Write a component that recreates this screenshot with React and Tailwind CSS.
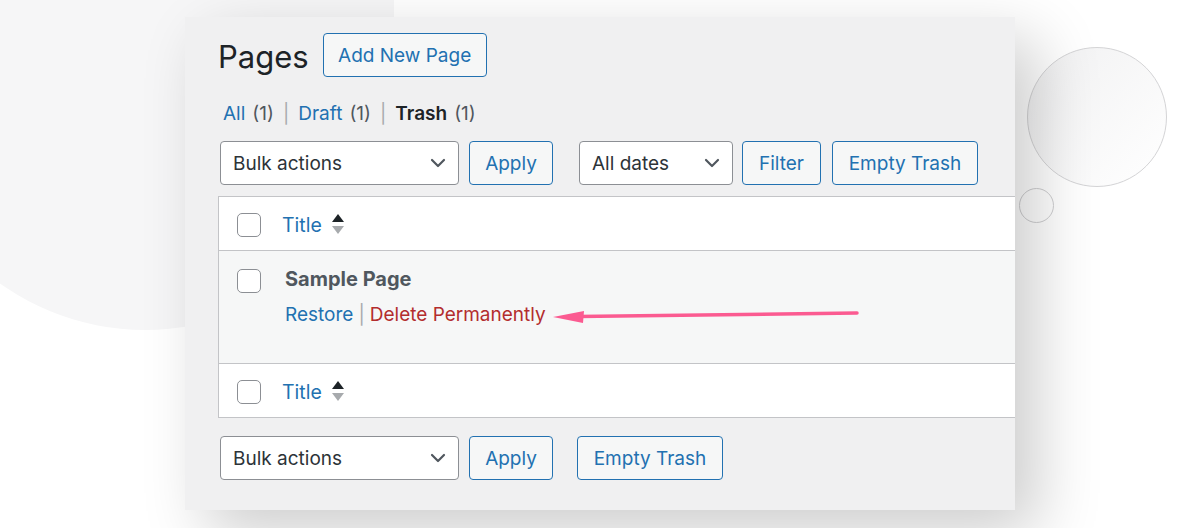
import React from 'react'

const Chevron = () => (
  <svg width="16" height="10" viewBox="0 0 16 10" fill="none">
    <path d="M2 2l6 6 6-6" stroke="#50575e" strokeWidth="2.2" strokeLinecap="round" strokeLinejoin="round" />
  </svg>
)

const SortArrows = () => (
  <svg width="12" height="22" viewBox="0 0 12 22" className="ml-[10px]">
    <path d="M6 1l6 8H0z" fill="#1d2327" />
    <path d="M6 21l6-8H0z" fill="#a7aaad" />
  </svg>
)

const Checkbox = ({ className = '' }) => (
  <div className={`h-[24px] w-[24px] shrink-0 rounded-[5px] border border-[#8c8f94] bg-white ${className}`}></div>
)

const Select = ({ label, width }) => (
  <div
    className={`flex h-[44px] items-center justify-between rounded-[4px] border border-[#8c8f94] bg-white pl-[12px] pr-[12px] text-[19px] text-[#2c3338] ${width}`}
  >
    <span className="pt-[2px]">{label}</span>
    <Chevron />
  </div>
)

const Button = ({ children, width }) => (
  <div
    className={`flex h-[44px] items-center justify-center rounded-[4px] border border-[#2271b1] bg-[#f6f7f7] pt-[2px] text-[19px] text-[#2271b1] ${width}`}
  >
    {children}
  </div>
)

const TitleRow = () => (
  <div className="flex h-[53px] items-center pl-[18px]">
    <Checkbox className="mt-[3px]" />
    <span className="ml-[21px] pt-[4px] text-[19.5px] text-[#2271b1]">Title</span>
    <SortArrows />
  </div>
)

const App = () => {
  return (
    <div className="relative h-[528px] w-[1200px] overflow-hidden bg-white font-[Inter,'Noto_Sans',sans-serif]">
      {/* background decoration */}
      <div className="absolute left-[-104px] top-[-300px] h-[630px] w-[498px] rounded-full bg-[#f6f6f7]"></div>
      <div className="absolute left-[1027px] top-[47px] h-[140px] w-[140px] rounded-full border border-[#d4d4d6] bg-gradient-to-br from-[#f1f1f2] to-white"></div>
      <div className="absolute left-[1019px] top-[188px] h-[35px] w-[35px] rounded-full border border-[#cfcfd1]"></div>

      <div className="relative z-10 ml-[185px] mt-[17px] h-[493px] w-[830px] overflow-hidden bg-[#f0f0f1] pl-[33px] pt-[16px] shadow-[22px_22px_60px_rgba(0,0,0,0.2)]">
        <div className="flex h-[44px] items-center">
          <h1 className="pt-[2px] text-[31px] leading-none text-[#1d2327]">Pages</h1>
          <div className="ml-[14px] flex h-[44px] w-[164px] items-center justify-center rounded-[4px] border border-[#2271b1] bg-[#f6f7f7] pt-[2px] text-[19px] text-[#2271b1]">
            Add New Page
          </div>
        </div>

        <div className="mt-[25px] flex h-[24px] items-center pl-[5px] text-[19px]">
          <span className="text-[#2271b1]">All</span>
          <span className="ml-[7px] text-[#50575e]">(1)</span>
          <span className="mx-[9px] text-[#a7aaad]">|</span>
          <span className="text-[#2271b1]">Draft</span>
          <span className="ml-[7px] text-[#50575e]">(1)</span>
          <span className="mx-[9px] text-[#a7aaad]">|</span>
          <span className="font-semibold text-[#1d2327]">Trash</span>
          <span className="ml-[7px] text-[#50575e]">(1)</span>
        </div>

        <div className="mt-[15px] flex items-center pl-[2px]">
          <Select label="Bulk actions" width="w-[239px]" />
          <div className="ml-[10px]"><Button width="w-[84px]">Apply</Button></div>
          <div className="ml-[26px]"><Select label="All dates" width="w-[154px]" /></div>
          <div className="ml-[9px]"><Button width="w-[79px]">Filter</Button></div>
          <div className="ml-[11px]"><Button width="w-[146px]">Empty Trash</Button></div>
        </div>

        <div className="mt-[11px] w-[830px] border border-[#c3c4c7] bg-white">
          <div className="border-b border-[#c3c4c7]">
            <TitleRow />
          </div>
          <div className="flex h-[113px] border-b border-[#c3c4c7] bg-[#f6f7f7] pl-[18px] pt-[14px]">
            <Checkbox className="mt-[4px]" />
            <div className="ml-[24px] flex flex-col">
              <span className="text-[20px] font-bold leading-[28px] text-[#50575e]">Sample Page</span>
              <div className="mt-[8px] flex items-center text-[19px] leading-[28px]">
                <span className="text-[#2271b1]">Restore</span>
                <span className="mx-[5px] text-[#a7aaad]">|</span>
                <span className="text-[#b32d2e]">Delete Permanently</span>
              </div>
            </div>
          </div>
          <TitleRow />
        </div>

        <div className="mt-[18px] flex items-center pl-[2px]">
          <Select label="Bulk actions" width="w-[239px]" />
          <div className="ml-[10px]"><Button width="w-[84px]">Apply</Button></div>
          <div className="ml-[24px]"><Button width="w-[146px]">Empty Trash</Button></div>
        </div>
      </div>

      {/* annotation arrow */}
      <svg className="pointer-events-none absolute left-0 top-0 z-20" width="1200" height="528">
        <line x1="857" y1="313" x2="578" y2="316.5" stroke="#fb5b91" strokeWidth="3.5" strokeLinecap="round" />
        <path d="M553 317 L584 311 L583 323 Z" fill="#fb5b91" />
      </svg>
    </div>
  )
}

export default App
